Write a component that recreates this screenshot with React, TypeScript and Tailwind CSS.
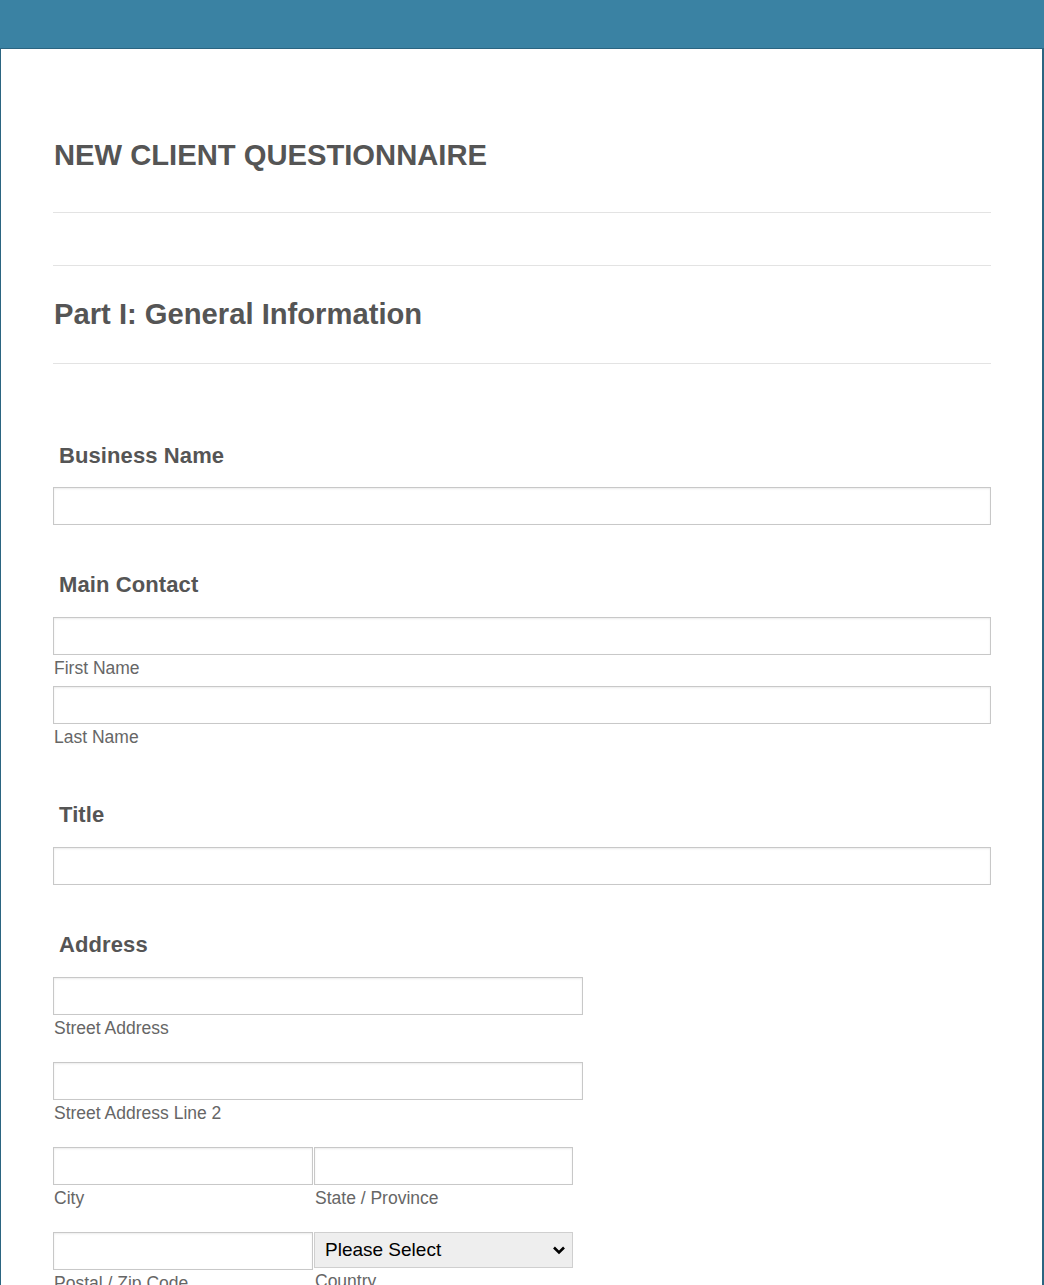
import React from "react";

const font = { fontFamily: '"Liberation Sans", Arial, sans-serif' };

function Input({ className = "" }: { className?: string }) {
  return (
    <div
      className={`h-[38px] border border-[#c8c8c8] bg-white shadow-[inset_0_1px_2px_rgba(0,0,0,0.08)] ${className}`}
    />
  );
}

function Label({ children, className = "" }: { children: React.ReactNode; className?: string }) {
  return (
    <div className={`pl-[6px] text-[22px] leading-[24px] font-bold text-[#555555] tracking-[0.1px] ${className}`}>{children}</div>
  );
}

function Sub({ children, className = "" }: { children: React.ReactNode; className?: string }) {
  return <div className={`mt-[3px] pl-[1px] text-[17.5px] leading-[20px] text-[#666666] ${className}`}>{children}</div>;
}

export default function App() {
  return (
    <div className="min-h-[1285px] bg-white" style={font}>
      <div className="h-[49px] bg-[#3a82a3] border-b border-[#2b6581]" />
      <div className="border-x-2 border-l-[1px] border-[#2b6581] bg-white pl-[52px] pr-[51px] pt-[89px] pb-[40px]">
        <h1 className="pl-[1px] text-[29.2px] leading-[34px] font-bold text-[#555555]">NEW CLIENT QUESTIONNAIRE</h1>
        <div className="mt-[40px] h-px bg-[#e3e3e3]" />
        <div className="mt-[52px] h-px bg-[#e3e3e3]" />
        <h2 className="pl-[1px] mt-[31px] text-[29.2px] leading-[34px] font-bold text-[#555555]">Part I: General Information</h2>
        <div className="mt-[32px] h-px bg-[#e3e3e3]" />

        <Label className="mt-[80px]">Business Name</Label>
        <Input className="mt-[19px]" />

        <Label className="mt-[48px]">Main Contact</Label>
        <Input className="mt-[20px]" />
        <Sub>First Name</Sub>
        <Input className="mt-[8px]" />
        <Sub>Last Name</Sub>

        <Label className="mt-[56px]">Title</Label>
        <Input className="mt-[20px]" />

        <Label className="mt-[48px]">Address</Label>
        <div className="w-[530px]">
          <Input className="mt-[20px]" />
          <Sub>Street Address</Sub>
          <Input className="mt-[24px]" />
          <Sub>Street Address Line 2</Sub>
        </div>
        <div className="mt-[24px] grid grid-cols-[260px_259px] gap-x-[1px]">
          <div>
            <Input />
            <Sub>City</Sub>
          </div>
          <div>
            <Input />
            <Sub>State / Province</Sub>
          </div>
        </div>
        <div className="mt-[24px] grid grid-cols-[260px_259px] gap-x-[1px]">
          <div>
            <Input />
            <Sub className="mt-[1px]">Postal / Zip Code</Sub>
          </div>
          <div>
            <div className="h-[36px] border border-[#cfcfcf] bg-[#eeeeee] flex items-center justify-between pl-[10px] pr-[6px]">
              <span className="text-[19px] text-black">Please Select</span>
              <svg width="14" height="10" viewBox="0 0 14 10">
                <path d="M2 2.5 L7 7.5 L12 2.5" fill="none" stroke="#000" strokeWidth="2.6" />
              </svg>
            </div>
            <Sub className="mt-[1px]">Country</Sub>
          </div>
        </div>
      </div>
    </div>
  );
}
